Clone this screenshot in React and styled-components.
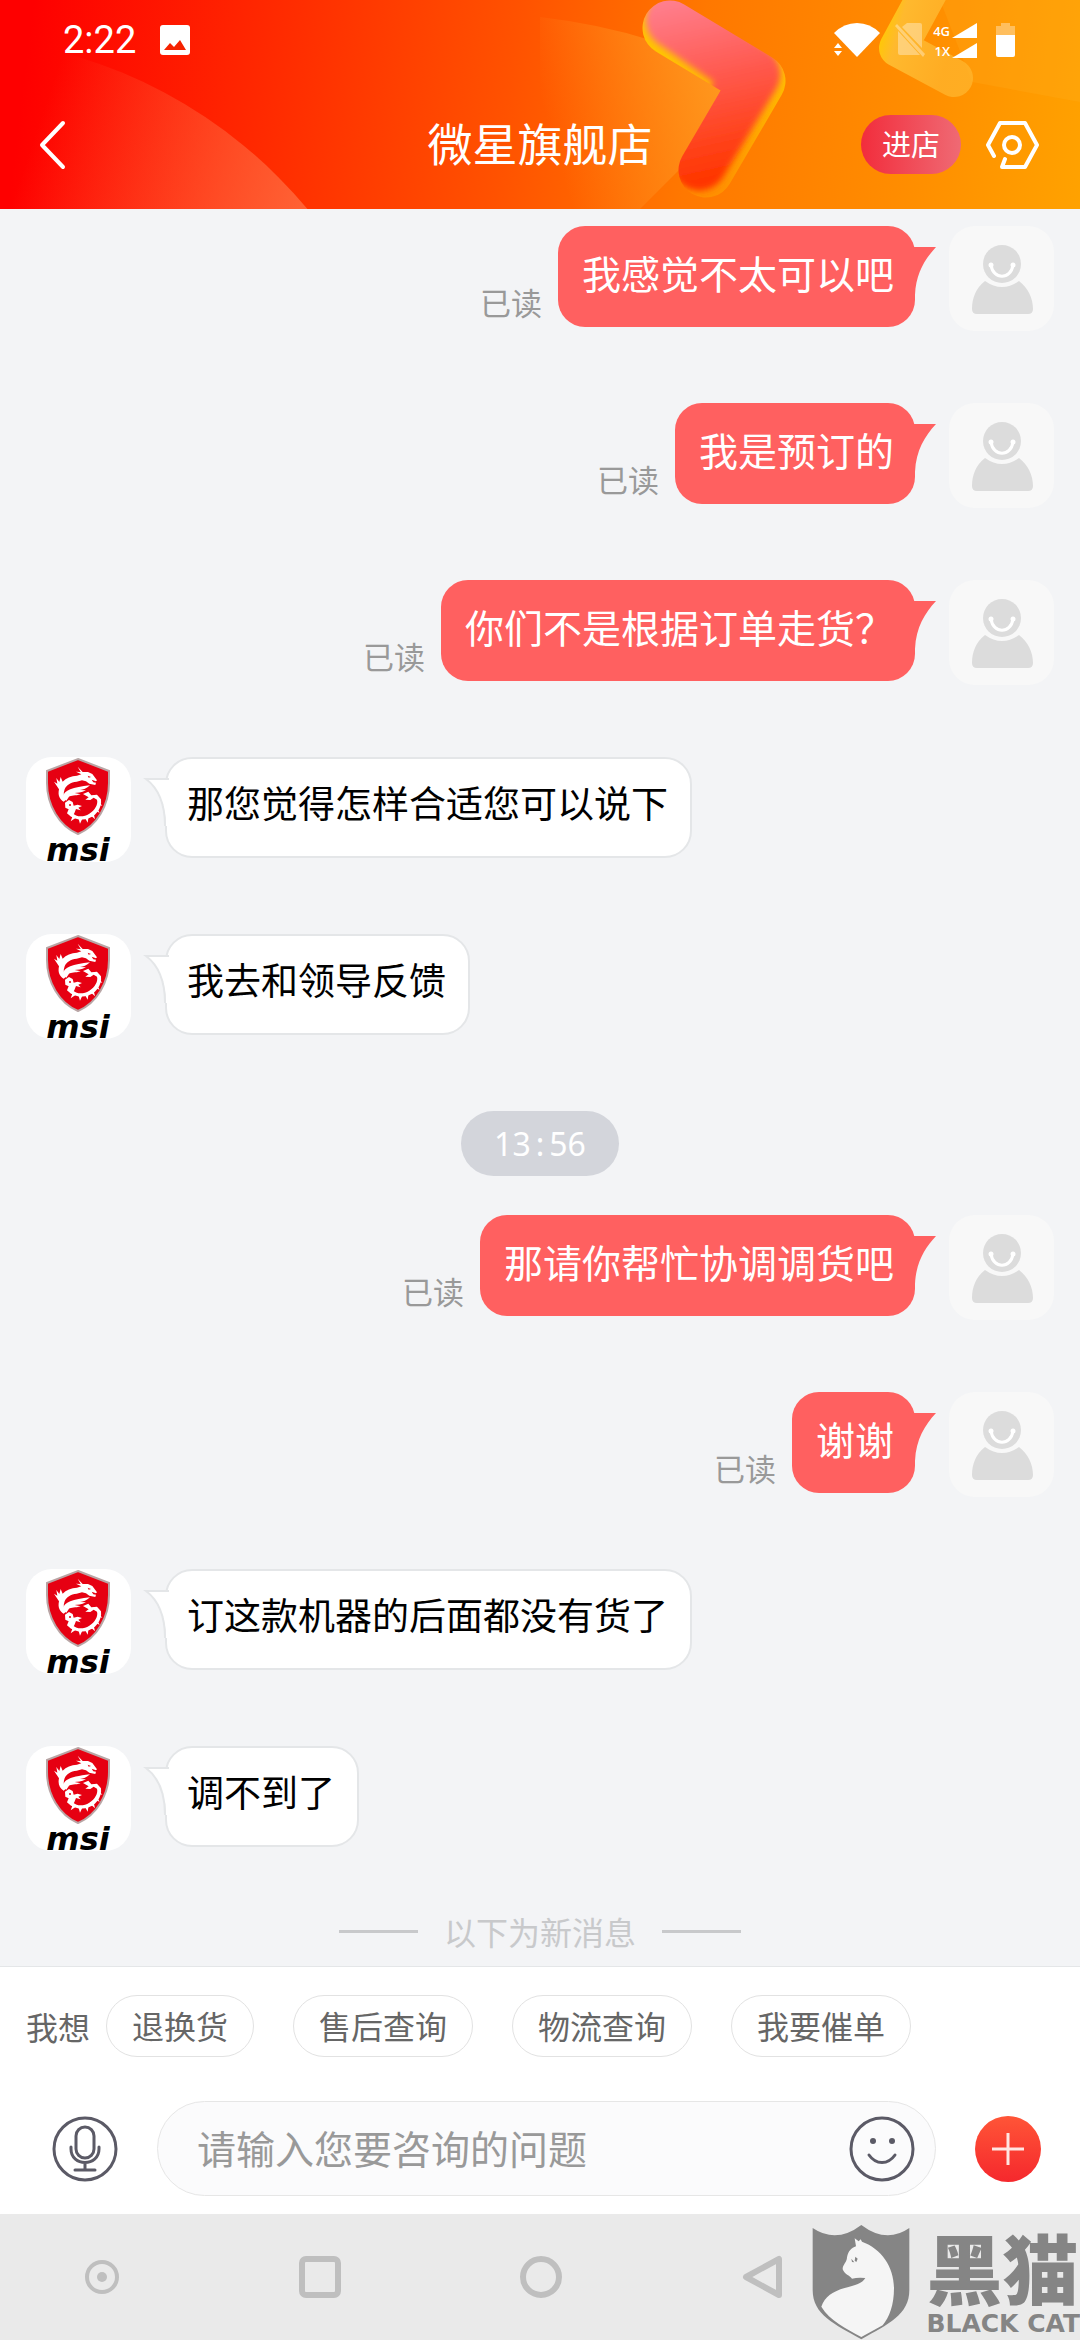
import React from "react";
import styled, { createGlobalStyle } from "styled-components";

const messages = [
  { id: 1, mine: true, text: "我感觉不太可以吧" },
  { id: 2, mine: true, text: "我是预订的" },
  { id: 3, mine: true, text: "你们不是根据订单走货？" },
  { id: 4, mine: false, text: "那您觉得怎样合适您可以说下" },
  { id: 5, mine: false, text: "我去和领导反馈" }
];

const laterMessages = [
  { id: 6, mine: true, text: "那请你帮忙协调调货吧" },
  { id: 7, mine: true, text: "谢谢" },
  { id: 8, mine: false, text: "订这款机器的后面都没有货了" },
  { id: 9, mine: false, text: "调不到了" }
];

const shortcuts = ["退换货", "售后查询", "物流查询", "我要催单"];

const HeaderArt = () => (
  <Art viewBox="0 0 1080 209" preserveAspectRatio="none" aria-hidden="true">
    <defs>
      <linearGradient id="disc" gradientUnits="userSpaceOnUse" x1="40" y1="120" x2="300" y2="209">
        <stop offset="0" stopColor="#ff7a50" stopOpacity="0" />
        <stop offset="1" stopColor="#ff7a50" stopOpacity="0.65" />
      </linearGradient>
      <linearGradient id="glow" gradientUnits="userSpaceOnUse" x1="550" y1="130" x2="725" y2="80">
        <stop offset="0" stopColor="#ff8a20" stopOpacity="0" />
        <stop offset="1" stopColor="#ff9c22" stopOpacity="0.9" />
      </linearGradient>
      <linearGradient id="limb" gradientUnits="userSpaceOnUse" x1="660" y1="0" x2="700" y2="180">
        <stop offset="0" stopColor="#ff8090" />
        <stop offset="0.45" stopColor="#ff5a50" />
        <stop offset="1" stopColor="#ff3600" />
      </linearGradient>
      <linearGradient id="rim" gradientUnits="userSpaceOnUse" x1="720" y1="60" x2="710" y2="200">
        <stop offset="0" stopColor="#ffc400" />
        <stop offset="1" stopColor="#ff8e00" />
      </linearGradient>
      <linearGradient id="gold" gradientUnits="userSpaceOnUse" x1="880" y1="30" x2="950" y2="50">
        <stop offset="0" stopColor="#ffca00" />
        <stop offset="0.25" stopColor="#ffb92e" />
        <stop offset="1" stopColor="#ffb62e" stopOpacity="0.75" />
      </linearGradient>
      <filter id="soft" filterUnits="userSpaceOnUse" x="600" y="-60" width="240" height="320">
        <feGaussianBlur stdDeviation="3" />
      </filter>
      <mask id="arrow" maskUnits="userSpaceOnUse" x="600" y="-60" width="240" height="320">
        <path
          d="M670 28L758 81L706 170"
          fill="none"
          stroke="#fff"
          strokeWidth="55"
          strokeLinecap="round"
          strokeLinejoin="round"
        />
      </mask>
    </defs>
    <circle cx="-62" cy="517" r="481" fill="url(#disc)" />
    <path d="M540 17Q600 24 650 40L722 88L684 165L640 209H540Z" fill="url(#glow)" />
    <path d="M972 82L1080 102V0H940Z" fill="#ffae20" opacity="0.25" />
    <g mask="url(#arrow)">
      <rect x="600" y="-60" width="240" height="320" fill="url(#rim)" />
      <path
        d="M674 20L752 74L699 162"
        fill="none"
        stroke="url(#limb)"
        strokeWidth="57"
        strokeLinecap="round"
        strokeLinejoin="round"
        filter="url(#soft)"
      />
    </g>
    <path
      d="M936 -22L898 48L954 78"
      fill="none"
      stroke="url(#gold)"
      strokeWidth="38"
      strokeLinecap="round"
      strokeLinejoin="round"
    />
  </Art>
);

const StatusIcons = () => (
  <Status>
    <svg width="48" height="34" viewBox="0 0 48 34" fill="#fff">
      <path d="M24 34L1 10Q11 0 24 0Q37 0 47 10Z" />
      <path d="M5 20L9 25H1ZM1 28H9L5 33Z" />
    </svg>
    <svg width="31" height="34" viewBox="0 0 31 34" fill="#fff" opacity="0.35">
      <path d="M12 0H25Q27 0 27 2V25L7 4ZM3 8L25 32H5Q3 32 3 30Z" />
      <path d="M0 3L2 1L30 31L28 34Z" />
    </svg>
    <Networks>
      <Network>
        4G
        <svg width="25" height="15" viewBox="0 0 25 15">
          <path d="M25 0V15H0Z" fill="#fff" />
        </svg>
      </Network>
      <Network>
        1X
        <svg width="25" height="15" viewBox="0 0 25 15">
          <path d="M25 0V15H0Z" fill="#fff" />
        </svg>
      </Network>
    </Networks>
    <svg width="19" height="34" viewBox="0 0 19 34" fill="#fff">
      <path d="M5 0H14V3H19V12H0V3H5Z" opacity="0.35" />
      <path d="M0 12H19V32Q19 34 17 34H2Q0 34 0 32Z" />
    </svg>
  </Status>
);

const UserAvatar = () => (
  <Avatar $color="#f8f8f8">
    <svg width="105" height="105" viewBox="0 0 105 105">
      <path
        d="M36 55C27 62 23 72 23 83Q23 88 28 88H79Q84 88 84 83C84 72 79 62 70 55Q53 67 36 55Z"
        fill="#dcdcdc"
      />
      <circle cx="53" cy="38" r="19" fill="#dcdcdc" />
      <path d="M42 39C44 54 62 54 64 39" fill="none" stroke="#fff" strokeWidth="3" />
      <circle cx="42" cy="39" r="2.5" fill="#fff" />
      <circle cx="64" cy="39" r="2.5" fill="#fff" />
    </svg>
  </Avatar>
);

const ShopAvatar = () => (
  <Avatar $color="#fff">
    <svg width="105" height="105" viewBox="0 0 105 105">
      <path
        d="M52 2L83 14V26C83 48 71 69 52 77C33 69 21 48 21 26V14Z"
        fill="#e60012"
        stroke="#b9a5a5"
        strokeWidth="2"
      />
      {/* dragon */}
      <g transform="translate(-6 -7) scale(0.3333)" fill="#fff">
        <path d="M173 50L188 66L204 66L217 72L231 91L228 94L215 89L220 97L228 98L226 105L208 101L198 94L186 91L170 95C152 97 139 105 134 118C129 131 131 141 138 149L131 155C119 148 113 136 117 118L102 95L112 101L109 84L118 96L122 81L128 95C138 84 154 78 171 77L184 73L168 65L182 66Z" />
        <path d="M128 143C132 118 158 113 210 106C200 116 190 119 180 120L198 121C184 128 172 129 164 129L182 133C166 138 153 136 147 140L139 152Z" />
        <path d="M189 132L205 125L214 136L231 134L243 148C247 176 225 203 196 208L179 209L158 203L149 194L156 188C170 202 190 202 208 191C225 181 235 162 231 149L221 143L211 150L196 149L206 142Z" />
        <path d="M135 158L147 150L158 156L161 167L173 164L186 168L175 173L182 181L168 177L163 190L154 201L141 190L146 178L136 173Z" />
        <path d="M158 198L152 214L170 202ZM175 203L180 221L188 204ZM194 202L203 218L206 199ZM210 194L225 208L220 186ZM225 181L239 189L230 171ZM233 164L247 167L235 154Z" />
        <circle cx="150" cy="165" r="3" fill="#e60012" />
        <path d="M203 77L213 81L206 83Z" fill="#e60012" />
      </g>
      <text
        x="52"
        y="104"
        textAnchor="middle"
        fontFamily="DejaVu Sans, sans-serif"
        fontSize="32"
        fontWeight="700"
        fontStyle="italic"
      >
        msi
      </text>
    </svg>
  </Avatar>
);

const Message = ({ mine, text }) => (
  <Row $mine={mine}>
    {mine ? <UserAvatar /> : <ShopAvatar />}
    <Bubble $mine={mine}>
      {text}
      {mine ? (
        <Tail $mine width="28" height="48" viewBox="0 0 28 48">
          <path d="M0 0H27C16 12 7 26 6 48H0Z" fill="#ff6060" />
        </Tail>
      ) : (
        <Tail width="28" height="48" viewBox="0 0 28 48">
          <path d="M28 1H2C14 10 22 26 22 48H28Z" fill="#fff" />
          <path d="M25 1H2C14 10 21 26 21 48" fill="none" stroke="#e4e6e8" strokeWidth="2" />
        </Tail>
      )}
    </Bubble>
    {mine && <Read>已读</Read>}
  </Row>
);

const App = () => (
  <>
    <GlobalStyle />
    <Page lang="zh-CN">
      <Header>
        <HeaderArt />
        <StatusBar>
          <Clock>2:22</Clock>
          <svg width="30" height="30" viewBox="0 0 30 30">
            <rect width="30" height="30" rx="3" fill="#fff" />
            <path d="M4 25L10 18L14 22L20 15L26 25Z" fill="#f52200" />
          </svg>
          <StatusIcons />
        </StatusBar>
        <TitleBar>
          <Side>
            <IconButton aria-label="返回">
              <svg width="28" height="50" viewBox="0 0 28 50">
                <path
                  d="M23 3L2 25L23 47"
                  fill="none"
                  stroke="#fff"
                  strokeWidth="4"
                  strokeLinecap="round"
                  strokeLinejoin="round"
                />
              </svg>
            </IconButton>
          </Side>
          <Title>微星旗舰店</Title>
          <Side $end>
            <ShopButton>进店</ShopButton>
            <IconButton aria-label="设置">
              <svg width="54" height="50" viewBox="0 0 54 50" fill="none" stroke="#fff" strokeWidth="4">
                <path
                  d="M8 36L2 25L14 3H39L51 25L39 47H16L19 39"
                  strokeLinecap="round"
                  strokeLinejoin="round"
                />
                <circle cx="26" cy="25" r="8" />
              </svg>
            </IconButton>
          </Side>
        </TitleBar>
      </Header>

      <Chat>
        <Thread>
          {messages.map(m => (
            <Message key={m.id} {...m} />
          ))}
        </Thread>
        <Time>
          13<Colon>:</Colon>56
        </Time>
        <Thread>
          {laterMessages.map(m => (
            <Message key={m.id} {...m} />
          ))}
        </Thread>
        <Divider>以下为新消息</Divider>
      </Chat>

      <Composer>
        <Shortcuts>
          我想
          <Chips>
            {shortcuts.map(s => (
              <Chip key={s}>{s}</Chip>
            ))}
          </Chips>
        </Shortcuts>
        <InputRow>
          <IconButton aria-label="语音">
            <svg
              width="66"
              height="66"
              viewBox="0 0 66 66"
              fill="none"
              stroke="#5b5a66"
              strokeWidth="3"
              strokeLinecap="round"
            >
              <circle cx="33" cy="33" r="31" />
              <rect x="24" y="11" width="18" height="31" rx="9" />
              <path d="M19 31V33C19 51 47 51 47 33V31M33 47V54M23 54H43" />
            </svg>
          </IconButton>
          <InputBox>
            <Input aria-label="咨询内容" placeholder="请输入您要咨询的问题" />
            <IconButton aria-label="表情">
              <svg width="66" height="66" viewBox="0 0 66 66" fill="none" stroke="#5b5a66">
                <circle cx="33" cy="33" r="31" strokeWidth="3" />
                <circle cx="24" cy="25" r="3" fill="#5b5a66" stroke="none" />
                <circle cx="43" cy="25" r="3" fill="#5b5a66" stroke="none" />
                <path d="M20 39C27 49 39 49 46 39" strokeWidth="3" strokeLinecap="round" />
              </svg>
            </IconButton>
          </InputBox>
          <IconButton aria-label="更多">
            <svg width="66" height="66" viewBox="0 0 66 66">
              <defs>
                <linearGradient id="plus" x1="0" y1="0" x2="0" y2="1">
                  <stop offset="0" stopColor="#ff5537" />
                  <stop offset="1" stopColor="#f5282d" />
                </linearGradient>
              </defs>
              <circle cx="33" cy="33" r="33" fill="url(#plus)" />
              <path d="M17 33H49M33 17V49" stroke="#ffe6e2" strokeWidth="3" />
            </svg>
          </IconButton>
        </InputRow>
      </Composer>

      <NavBar>
        <IconButton aria-label="隐藏导航栏">
          <svg width="34" height="34" viewBox="0 0 34 34">
            <circle cx="17" cy="17" r="15" fill="none" stroke="#bfbfbf" strokeWidth="4" />
            <circle cx="17" cy="17" r="5" fill="#bfbfbf" />
          </svg>
        </IconButton>
        <IconButton aria-label="最近任务">
          <svg width="42" height="42" viewBox="0 0 42 42" fill="none" stroke="#bfbfbf" strokeWidth="6">
            <rect x="3" y="3" width="36" height="36" rx="4" />
          </svg>
        </IconButton>
        <IconButton aria-label="主屏幕">
          <svg width="42" height="42" viewBox="0 0 42 42" fill="none" stroke="#bfbfbf" strokeWidth="6">
            <circle cx="21" cy="21" r="18" />
          </svg>
        </IconButton>
        <IconButton aria-label="后退">
          <svg width="40" height="42" viewBox="0 0 40 42" fill="none" stroke="#bfbfbf" strokeWidth="6">
            <path d="M37 3V39L4 21Z" strokeLinejoin="round" />
          </svg>
        </IconButton>
        <Watermark>
          <svg width="98" height="115" viewBox="93 75 292 345">
            <path
              d="M94 84Q165 132 240 75Q315 132 384 84V270C384 345 320 372 240 418C160 372 94 345 94 270Z"
              fill="#858585"
            />
            <path
              d="M220 115L232 124L238 118L242 125C300 146 338 200 338 265C338 315 324 352 304 376L240 411C195 386 145 362 120 320C130 290 155 274 190 264C222 256 243 250 252 234Q230 231 212 236C205 226 190 224 184 208C183 196 197 186 197 172C201 152 210 144 224 139Z"
              fill="#f5f5f5"
            />
            <path d="M210 176L219 187L212 186ZM222 170L229 176L225 186L220 182Z" fill="#858585" />
          </svg>
          <Brand>
            <BrandName>黑猫</BrandName>
            <BrandLatin>BLACK CAT</BrandLatin>
          </Brand>
        </Watermark>
      </NavBar>
    </Page>
  </>
);

const GlobalStyle = createGlobalStyle`
  * {
    box-sizing: border-box;
  }
  body {
    margin: 0;
    font-family: "Noto Sans CJK SC", sans-serif;
  }
  button, input {
    font-family: inherit;
  }
  svg {
    display: block;
    flex-shrink: 0;
    overflow: visible;
  }
`;

const Page = styled.div`
  display: flex;
  flex-direction: column;
  min-height: 100vh;
  background-color: #f3f4f6;
`;

const Header = styled.header`
  position: relative;
  color: #fff;
  background: linear-gradient(
    97deg,
    #fe0000 3%,
    #ff2400 22%,
    #ff5200 47%,
    #ff7800 64%,
    #ff8c00 83%,
    #ffa200 100%
  );
`;

const Art = styled.svg`
  position: absolute;
  top: 0;
  left: 0;
  width: 100%;
  height: 100%;
  overflow: hidden;
`;

const StatusBar = styled.div`
  position: relative;
  display: flex;
  align-items: center;
  gap: 24px;
  height: 80px;
  padding: 0 65px 0 63px;
`;

const Clock = styled.span`
  font-family: Roboto, sans-serif;
  font-size: 38px;
  line-height: 44px;
`;

const Status = styled.div`
  display: flex;
  align-items: center;
  gap: 14px;
  margin-left: auto;
`;

const Networks = styled.div`
  display: flex;
  flex-direction: column;
  gap: 5px;
  margin: 0 5px 0 -7px;
`;

const Network = styled.span`
  display: flex;
  align-items: flex-end;
  justify-content: flex-end;
  gap: 2px;
  font: 600 13px/13px "Open Sans", sans-serif;
`;

const TitleBar = styled.div`
  position: relative;
  display: flex;
  align-items: center;
  height: 129px;
  padding: 0 40px;
`;

const Side = styled.div`
  display: flex;
  flex: 1;
  align-items: center;
  justify-content: ${props => (props.$end ? "flex-end" : "flex-start")};
  gap: 25px;
`;

const Title = styled.h1`
  margin: 0;
  padding-bottom: 4px;
  font-size: 45px;
  font-weight: 400;
  line-height: 60px;
`;

const IconButton = styled.button`
  padding: 0;
  border: none;
  background: none;
`;

const ShopButton = styled.button`
  height: 59px;
  padding: 0 21px 3px;
  border: none;
  border-radius: 30px;
  font-size: 29px;
  line-height: 40px;
  color: #fff;
  background: linear-gradient(to right, #f22d3c, #ef6a74);
`;

const Chat = styled.main`
  display: flex;
  flex: 1;
  flex-direction: column;
  align-items: center;
  padding: 17px 26px 11px;
`;

const Thread = styled.section`
  display: flex;
  flex-direction: column;
  gap: 72px;
  width: 100%;
`;

const Row = styled.div`
  display: flex;
  flex-direction: ${props => (props.$mine ? "row-reverse" : "row")};
  gap: 34px;
`;

const Avatar = styled.div`
  width: 105px;
  height: 105px;
  border-radius: 26px;
  background-color: ${props => props.$color};
`;

const Bubble = styled.div`
  position: relative;
  display: flex;
  align-items: center;
  height: 101px;
  padding: ${props => (props.$mine ? "0 21px 9px 24px" : "0 22px 12px 20px")};
  border: ${props => (props.$mine ? "none" : "2px solid #e4e6e8")};
  border-radius: 27px;
  font-size: ${props => (props.$mine ? "39px" : "37px")};
  line-height: 56px;
  color: ${props => (props.$mine ? "#fff" : "#000")};
  background-color: ${props => (props.$mine ? "#ff6060" : "#fff")};
`;

const Tail = styled.svg`
  position: absolute;
  top: ${props => (props.$mine ? "21px" : "19px")};
  ${props => (props.$mine ? "right: -22px;" : "left: -23px;")}
`;

const Read = styled.span`
  align-self: flex-end;
  margin: 0 -18px 5px 0;
  font-size: 31px;
  line-height: 48px;
  color: #999;
`;

const Time = styled.time`
  margin: 72px 0 39px;
  padding: 0 33px;
  border-radius: 33px;
  font: 400 32px/65px "Noto Sans", sans-serif;
  color: #fff;
  background-color: #d3d5db;
`;

const Colon = styled.span`
  margin: 0 5px;
`;

const Divider = styled.div`
  display: flex;
  align-items: center;
  gap: 26px;
  margin-top: 57px;
  font-size: 32px;
  line-height: 46px;
  color: #c8c9cb;

  &::before,
  &::after {
    content: "";
    width: 79px;
    height: 3px;
    background-color: #c8c9cb;
  }
`;

const Composer = styled.section`
  padding-top: 28px;
  border-top: 1px solid #e4e6e8;
  background-color: #fff;
`;

const Shortcuts = styled.div`
  display: flex;
  align-items: center;
  gap: 16px;
  padding: 0 26px;
  font-size: 32px;
  line-height: 60px;
  color: #666;
`;

const Chips = styled.div`
  display: flex;
  gap: 39px;
`;

const Chip = styled.button`
  height: 62px;
  padding: 0 25px 3px;
  border: 1px solid #e2e2e2;
  border-radius: 31px;
  font-size: 32px;
  line-height: 46px;
  color: #666;
  background: none;
`;

const InputRow = styled.div`
  display: flex;
  align-items: center;
  gap: 39px;
  padding: 44px 39px 18px 52px;
`;

const InputBox = styled.div`
  display: flex;
  flex: 1;
  align-items: center;
  height: 95px;
  padding: 0 20px 0 39px;
  border: 1px solid #e6e6e6;
  border-radius: 48px;
  background-color: #fbfbfc;
`;

const Input = styled.input`
  flex: 1;
  min-width: 0;
  padding: 0 0 3px;
  border: none;
  outline: none;
  font-size: 39px;
  line-height: 56px;
  background: none;

  &::placeholder {
    color: #999;
    opacity: 1;
  }
`;

const NavBar = styled.nav`
  position: relative;
  display: flex;
  align-items: center;
  justify-content: space-between;
  height: 126px;
  padding: 0 298px 0 85px;
  background-color: #eaeaea;
`;

const Watermark = styled.div`
  position: absolute;
  right: 0;
  bottom: 0;
  display: flex;
  gap: 16px;
  color: #858585;
`;

const Brand = styled.div`
  display: flex;
  flex-direction: column;
`;

const BrandName = styled.span`
  font-size: 76px;
  font-weight: 900;
  line-height: 82px;
`;

const BrandLatin = styled.span`
  font: 700 25px/33px "DejaVu Sans", sans-serif;
`;

export default App;
